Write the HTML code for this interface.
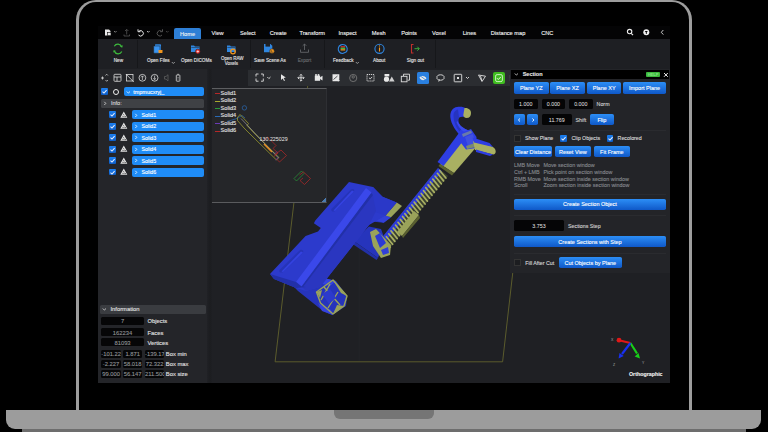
<!DOCTYPE html>
<html><head><meta charset="utf-8">
<style>
*{margin:0;padding:0;box-sizing:border-box}
html,body{width:768px;height:432px;overflow:hidden;background:#000;font-family:"Liberation Sans",sans-serif;color:#e6e6e6}
div,svg,span{position:absolute}
#lid{left:76px;top:0;width:616px;height:420px;border:3.8px solid #9d9d9d;border-top-width:2.2px;border-bottom:none;border-radius:20px 20px 0 0;background:#000}
#base{left:6px;top:410px;width:755px;height:19px;background:#9c9c9c;border-radius:0 0 9px 9px}
#notch{left:334px;top:410px;width:100px;height:9px;background:#757575;border-radius:0 0 6px 6px}
#strip{left:22px;top:429px;width:724px;height:3px;background:#6d6d6d}
#menu{left:98px;top:26px;width:572px;height:13px;background:#040405}
#ribbon{left:98px;top:39px;width:572px;height:30px;background:#1e1f23}
#lp{left:98px;top:69px;width:110px;height:314px;background:#242529}
#vp{left:208px;top:69px;width:462px;height:314px;background:#1f2024}
#rp{left:510px;top:69px;width:160px;height:204px;background:#232428}
.t{white-space:nowrap;font-size:5.8px;line-height:1;-webkit-text-stroke:0.12px currentColor}
.m{top:31.4px;color:#f2f2f2;font-size:5.65px}
.rl{top:59px;color:#e4e4e4;font-size:4.7px}
.sep{width:1px;background:#16171a}
.btn{-webkit-text-stroke:0.12px #fff;background:linear-gradient(#2c8ef6,#0f58c8);border-radius:1.8px;color:#fff;font-size:5.5px;line-height:1;text-align:center;white-space:nowrap}
.inp{background:#050506;border-radius:1.5px;color:#e8e8e8;font-size:5.3px;line-height:1;text-align:center;white-space:nowrap}
.hl{color:#85888d;font-size:5.4px}
</style></head><body>
<div id="lid"></div>
<div id="base"></div>
<div id="notch"></div>
<div id="strip"></div>

<!-- menu bar -->
<div id="menu"></div>
<div style="left:174px;top:28px;width:27px;height:11px;background:#2e7fd6;border-radius:2px 2px 0 0"></div>
<span class="t m" style="left:180px;top:31.7px">Home</span>
<span class="t m" style="left:211.5px">View</span>
<span class="t m" style="left:240px">Select</span>
<span class="t m" style="left:269.7px">Create</span>
<span class="t m" style="left:299.5px">Transform</span>
<span class="t m" style="left:338.5px">Inspect</span>
<span class="t m" style="left:371.8px">Mesh</span>
<span class="t m" style="left:401.2px">Points</span>
<span class="t m" style="left:432px">Voxel</span>
<span class="t m" style="left:462.7px">Lines</span>
<span class="t m" style="left:490.8px">Distance map</span>
<span class="t m" style="left:541.2px">CNC</span>

<!-- ribbon -->
<div id="ribbon"></div>
<div class="sep" style="left:136.5px;top:40px;height:28px"></div>
<div class="sep" style="left:250px;top:40px;height:28px"></div>
<div class="sep" style="left:323.5px;top:40px;height:28px"></div>
<div class="sep" style="left:434.5px;top:40px;height:28px"></div>
<!-- menu icons -->
<svg style="left:103px;top:27.2px" width="70" height="10" viewBox="0 0 70 10">
  <path d="M2 2.5h4l1.5 1.5v4.5h-5.5z" fill="#e8e8e8"/><rect x="4.5" y="5.5" width="3.5" height="3" fill="#e8e8e8" stroke="#070708" stroke-width="0.6"/>
  <path d="M11 4l1.3 1.3L13.6 4" stroke="#aaa" stroke-width="0.7" fill="none"/>
  <path d="M21 7.5v1.5h5.5v-1.5M23.7 7.5v-5M22 4l1.7-1.7L25.4 4" stroke="#555" stroke-width="0.8" fill="none"/>
  <path d="M36 4.2a2.7 2.7 0 1 1 -0.5 3.8M35 2.3v2.4h2.4" stroke="#e8e8e8" stroke-width="1" fill="none"/>
  <path d="M44 4l1.3 1.3L46.6 4" stroke="#ddd" stroke-width="0.8" fill="none"/>
  <path d="M58.5 4.2a2.7 2.7 0 1 0 0.5 3.8M59.5 2.3v2.4h-2.4" stroke="#555" stroke-width="1" fill="none"/>
  <path d="M63 4l1.3 1.3L65.6 4" stroke="#555" stroke-width="0.7" fill="none"/>
</svg>
<svg style="left:624px;top:27px" width="44" height="11" viewBox="0 0 44 11">
  <circle cx="5.6" cy="4.6" r="2.2" stroke="#eee" stroke-width="1.1" fill="none"/><path d="M7.2 6.3l1.8 1.8" stroke="#eee" stroke-width="1.2"/>
  <circle cx="22.3" cy="5.3" r="3" fill="#eee"/><path d="M20.8 4h3l-1.1 1.5v1.6h-0.8v-1.6z" fill="#070708"/>
  <path d="M39.3 3l-2 2.3 2 2.3" stroke="#ddd" stroke-width="0.9" fill="none"/>
</svg>
<!-- ribbon icons -->
<svg style="left:110px;top:42px" width="330" height="14" viewBox="0 0 330 14">
  <!-- New -->
  <path d="M4.3 4.2a4.1 4.1 0 0 1 7.4 0.6" stroke="#3dbb3d" stroke-width="1.2" fill="none"/>
  <path d="M11.8 9.5a4.1 4.1 0 0 1 -7.5 -0.3" stroke="#3dbb3d" stroke-width="1.2" fill="none"/>
  <path d="M12.8 3.2l-0.6 2.6-2.3-1.2z" fill="#3dbb3d"/><path d="M3.2 10.5l0.5-2.6 2.4 1.1z" fill="#3dbb3d"/>
  <!-- Open Files -->
  <rect x="45" y="2.2" width="6" height="7" rx="0.6" fill="#2f86e0"/>
  <rect x="43.7" y="4" width="6.3" height="7.2" rx="0.6" fill="#3a94f0" stroke="#1f2125" stroke-width="0.5"/>
  <rect x="48.5" y="8" width="4" height="3" rx="0.4" fill="#f0961e"/>
  <!-- Open DICOMs -->
  <path d="M81 3.5h3l1 1h4.5v5.5h-8.5z" fill="#2f86e0"/><path d="M81.3 5.5h8" stroke="#1f2125" stroke-width="0.5"/>
  <circle cx="87.8" cy="9.5" r="2.4" fill="#e03030" stroke="#1f2125" stroke-width="0.5"/><path d="M86.6 9.5h2.4M87.8 8.3v2.4" stroke="#fff" stroke-width="0.6"/>
  <!-- Open RAW -->
  <path d="M117 3.5h3l1 1h4.5v5.5h-8.5z" fill="#2f86e0"/><path d="M117.3 5.5h8" stroke="#1f2125" stroke-width="0.5"/>
  <circle cx="123" cy="9.5" r="2.3" fill="none" stroke="#f0961e" stroke-width="1.3"/>
  <!-- Save -->
  <path d="M154 2h6.5l1.8 1.8v6.5h-8.3z" fill="#2f86e0"/><rect x="155.5" y="2" width="4.5" height="2.6" fill="#1f2125"/>
  <circle cx="162" cy="9.2" r="2.4" fill="#f0961e" stroke="#1f2125" stroke-width="0.5"/><path d="M161.2 8v2.2h1.8" stroke="#1f2125" stroke-width="0.5" fill="none"/>
  <!-- Export -->
  <path d="M190.5 7.5v2.8h8v-2.8M194.5 8v-6M192.7 3.8l1.8-1.8 1.8 1.8" stroke="#6a6c70" stroke-width="0.8" fill="none"/>
  <!-- Feedback -->
  <path d="M232.8 11.5a4.5 4.5 0 1 1 3.2-1.4z" fill="none" stroke="#2f86e0" stroke-width="1.1"/>
  <rect x="230.6" y="4.2" width="4.6" height="1.3" fill="#e03030"/><rect x="230.6" y="5.7" width="4.6" height="1.3" fill="#3dbb3d"/><rect x="230.6" y="7.2" width="4.6" height="1.3" fill="#f0961e"/>
  <!-- About -->
  <circle cx="269.5" cy="6.8" r="4.6" fill="none" stroke="#2f86e0" stroke-width="1.1"/>
  <path d="M269.5 5.5v4" stroke="#f0961e" stroke-width="1.1"/><circle cx="269.5" cy="3.9" r="0.6" fill="#f0961e"/>
  <!-- Sign out -->
  <path d="M303.5 2.5h-2v8.5h2" stroke="#c0302c" stroke-width="1.1" fill="none"/>
  <path d="M304.5 6.7h4.5M307.3 4.7l2 2-2 2" stroke="#3dbb3d" stroke-width="0.9" fill="none"/>
</svg>
<span class="t rl" style="left:113.7px">New</span>
<span class="t rl" style="left:147px">Open Files</span>
<svg style="left:171px;top:61px" width="5" height="4"><path d="M0.8 1l1.5 1.5L3.8 1" stroke="#ccc" stroke-width="0.7" fill="none"/></svg>
<span class="t rl" style="left:181px">Open DICOMs</span>
<span class="t rl" style="left:221px;top:56.8px;font-size:4.5px">Open RAW</span>
<span class="t rl" style="left:224.8px;top:61.6px;font-size:4.5px">Voxels</span>
<span class="t rl" style="left:254px">Save Scene As</span>
<span class="t rl" style="left:297.7px;color:#6a6c70">Export</span>
<span class="t rl" style="left:333px">Feedback</span>
<svg style="left:355px;top:61px" width="5" height="4"><path d="M0.8 1l1.5 1.5L3.8 1" stroke="#ccc" stroke-width="0.7" fill="none"/></svg>
<span class="t rl" style="left:373px">About</span>
<span class="t rl" style="left:406.8px">Sign out</span>

<!-- left panel -->
<div id="lp"></div>
<svg style="left:99px;top:73px" width="86" height="10" viewBox="0 0 86 10">
  <path d="M2 5h3M3.5 3.5v3" stroke="#ddd" stroke-width="0.8"/><path d="M6.5 2.5l1.2-1.3 1.2 1.3M6.5 7l1.2 1.3L8.9 7" stroke="#ddd" stroke-width="0.7" fill="none"/>
  <rect x="15" y="1.3" width="7" height="7" rx="0.8" fill="none" stroke="#ddd" stroke-width="0.8"/><path d="M15 4h7M18 4v4.3" stroke="#ddd" stroke-width="0.8"/>
  <rect x="27.5" y="1.5" width="6.5" height="6.5" fill="none" stroke="#ddd" stroke-width="0.8"/><path d="M26.8 1l8 8" stroke="#ddd" stroke-width="0.8"/>
  <circle cx="43.4" cy="4.8" r="3.4" fill="none" stroke="#ddd" stroke-width="0.8"/><path d="M43.4 7v-4M42 4.3l1.4-1.4 1.4 1.4" stroke="#ddd" stroke-width="0.7" fill="none"/>
  <circle cx="55.6" cy="4.8" r="3.4" fill="none" stroke="#ddd" stroke-width="0.8"/><path d="M55.6 2.6v4M54.2 5.3l1.4 1.4 1.4-1.4" stroke="#ddd" stroke-width="0.7" fill="none"/>
  <path d="M65.5 3.5h1.5l2-1.8v6.2l-2-1.8h-1.5z" fill="none" stroke="#666" stroke-width="0.7"/>
  <rect x="77.3" y="2" width="3.6" height="6.2" rx="0.6" fill="none" stroke="#ddd" stroke-width="0.8"/><path d="M78.3 1.3h1.6" stroke="#ddd" stroke-width="0.7"/><path d="M78.5 4.5h1.2M78.5 6h1.2" stroke="#ddd" stroke-width="0.5"/>
</svg>
<div style="left:101px;top:88.4px;width:6.8px;height:6.8px;background:linear-gradient(#1c80f2,#0e5cc4);border-radius:1px"></div>
<svg style="left:101px;top:88.4px" width="7" height="7"><path d="M1.5 3.6l1.5 1.5 2.6-2.9" stroke="#e8f0ff" stroke-width="1.05" fill="none"/></svg>
<div style="left:112.6px;top:88.9px;width:6.4px;height:6.4px;border:1.8px solid #eee;border-radius:50%"></div>
<div style="left:123.5px;top:87.3px;width:80.5px;height:9px;background:#1f8cf6;border-radius:2px"></div>
<svg style="left:125.5px;top:89.5px" width="5" height="5"><path d="M0.8 1.5l1.6 1.6L4 1.5" stroke="#fff" stroke-width="0.8" fill="none"/></svg>
<span class="t" style="left:133.2px;top:89.8px;color:#fff;font-size:5.5px">tmpmucxryj_</span>
<div style="left:101.3px;top:99px;width:102.7px;height:8.8px;background:#3f4145;border-radius:1.5px"></div>
<svg style="left:103px;top:101px" width="5" height="5"><path d="M1.3 0.8l1.5 1.6-1.5 1.6" stroke="#ddd" stroke-width="0.8" fill="none"/></svg>
<span class="t" style="left:111px;top:100.8px;color:#d8d8d8;font-size:5.5px">Info:</span>
<div style="left:109.4px;top:111.40px;width:6.6px;height:6.7px;background:linear-gradient(#1c80f2,#0e5cc4);border-radius:1px"></div>
<svg style="left:109.4px;top:111.40px" width="7" height="7"><path d="M1.5 3.6l1.5 1.5 2.6-2.9" stroke="#e8f0ff" stroke-width="1.05" fill="none"/></svg>
<svg style="left:120px;top:110.70px" width="8" height="8" viewBox="0 0 8 8"><path d="M3.8 0.6L7.3 6.8H0.3z" fill="#e6e6e6"/><path d="M3.2 3.2l1.2 1M2.3 5.3h1.5M4.4 5.6h1.6" stroke="#333" stroke-width="0.7"/></svg>
<div style="left:131.9px;top:110.20px;width:72.1px;height:9px;background:#1f8cf6;border-radius:2px"></div>
<svg style="left:134px;top:112.50px" width="5" height="5"><path d="M1.3 0.8l1.5 1.6-1.5 1.6" stroke="#fff" stroke-width="0.8" fill="none"/></svg>
<span class="t" style="left:141.5px;top:112.70px;color:#fff;font-size:5.3px">Solid1</span>
<div style="left:109.4px;top:122.88px;width:6.6px;height:6.7px;background:linear-gradient(#1c80f2,#0e5cc4);border-radius:1px"></div>
<svg style="left:109.4px;top:122.88px" width="7" height="7"><path d="M1.5 3.6l1.5 1.5 2.6-2.9" stroke="#e8f0ff" stroke-width="1.05" fill="none"/></svg>
<svg style="left:120px;top:122.18px" width="8" height="8" viewBox="0 0 8 8"><path d="M3.8 0.6L7.3 6.8H0.3z" fill="#e6e6e6"/><path d="M3.2 3.2l1.2 1M2.3 5.3h1.5M4.4 5.6h1.6" stroke="#333" stroke-width="0.7"/></svg>
<div style="left:131.9px;top:121.68px;width:72.1px;height:9px;background:#1f8cf6;border-radius:2px"></div>
<svg style="left:134px;top:123.98px" width="5" height="5"><path d="M1.3 0.8l1.5 1.6-1.5 1.6" stroke="#fff" stroke-width="0.8" fill="none"/></svg>
<span class="t" style="left:141.5px;top:124.18px;color:#fff;font-size:5.3px">Solid2</span>
<div style="left:109.4px;top:134.36px;width:6.6px;height:6.7px;background:linear-gradient(#1c80f2,#0e5cc4);border-radius:1px"></div>
<svg style="left:109.4px;top:134.36px" width="7" height="7"><path d="M1.5 3.6l1.5 1.5 2.6-2.9" stroke="#e8f0ff" stroke-width="1.05" fill="none"/></svg>
<svg style="left:120px;top:133.66px" width="8" height="8" viewBox="0 0 8 8"><path d="M3.8 0.6L7.3 6.8H0.3z" fill="#e6e6e6"/><path d="M3.2 3.2l1.2 1M2.3 5.3h1.5M4.4 5.6h1.6" stroke="#333" stroke-width="0.7"/></svg>
<div style="left:131.9px;top:133.16px;width:72.1px;height:9px;background:#1f8cf6;border-radius:2px"></div>
<svg style="left:134px;top:135.46px" width="5" height="5"><path d="M1.3 0.8l1.5 1.6-1.5 1.6" stroke="#fff" stroke-width="0.8" fill="none"/></svg>
<span class="t" style="left:141.5px;top:135.66px;color:#fff;font-size:5.3px">Solid3</span>
<div style="left:109.4px;top:145.84px;width:6.6px;height:6.7px;background:linear-gradient(#1c80f2,#0e5cc4);border-radius:1px"></div>
<svg style="left:109.4px;top:145.84px" width="7" height="7"><path d="M1.5 3.6l1.5 1.5 2.6-2.9" stroke="#e8f0ff" stroke-width="1.05" fill="none"/></svg>
<svg style="left:120px;top:145.14px" width="8" height="8" viewBox="0 0 8 8"><path d="M3.8 0.6L7.3 6.8H0.3z" fill="#e6e6e6"/><path d="M3.2 3.2l1.2 1M2.3 5.3h1.5M4.4 5.6h1.6" stroke="#333" stroke-width="0.7"/></svg>
<div style="left:131.9px;top:144.64px;width:72.1px;height:9px;background:#1f8cf6;border-radius:2px"></div>
<svg style="left:134px;top:146.94px" width="5" height="5"><path d="M1.3 0.8l1.5 1.6-1.5 1.6" stroke="#fff" stroke-width="0.8" fill="none"/></svg>
<span class="t" style="left:141.5px;top:147.14px;color:#fff;font-size:5.3px">Solid4</span>
<div style="left:109.4px;top:157.32px;width:6.6px;height:6.7px;background:linear-gradient(#1c80f2,#0e5cc4);border-radius:1px"></div>
<svg style="left:109.4px;top:157.32px" width="7" height="7"><path d="M1.5 3.6l1.5 1.5 2.6-2.9" stroke="#e8f0ff" stroke-width="1.05" fill="none"/></svg>
<svg style="left:120px;top:156.62px" width="8" height="8" viewBox="0 0 8 8"><path d="M3.8 0.6L7.3 6.8H0.3z" fill="#e6e6e6"/><path d="M3.2 3.2l1.2 1M2.3 5.3h1.5M4.4 5.6h1.6" stroke="#333" stroke-width="0.7"/></svg>
<div style="left:131.9px;top:156.12px;width:72.1px;height:9px;background:#1f8cf6;border-radius:2px"></div>
<svg style="left:134px;top:158.42px" width="5" height="5"><path d="M1.3 0.8l1.5 1.6-1.5 1.6" stroke="#fff" stroke-width="0.8" fill="none"/></svg>
<span class="t" style="left:141.5px;top:158.62px;color:#fff;font-size:5.3px">Solid5</span>
<div style="left:109.4px;top:168.80px;width:6.6px;height:6.7px;background:linear-gradient(#1c80f2,#0e5cc4);border-radius:1px"></div>
<svg style="left:109.4px;top:168.80px" width="7" height="7"><path d="M1.5 3.6l1.5 1.5 2.6-2.9" stroke="#e8f0ff" stroke-width="1.05" fill="none"/></svg>
<svg style="left:120px;top:168.10px" width="8" height="8" viewBox="0 0 8 8"><path d="M3.8 0.6L7.3 6.8H0.3z" fill="#e6e6e6"/><path d="M3.2 3.2l1.2 1M2.3 5.3h1.5M4.4 5.6h1.6" stroke="#333" stroke-width="0.7"/></svg>
<div style="left:131.9px;top:167.60px;width:72.1px;height:9px;background:#1f8cf6;border-radius:2px"></div>
<svg style="left:134px;top:169.90px" width="5" height="5"><path d="M1.3 0.8l1.5 1.6-1.5 1.6" stroke="#fff" stroke-width="0.8" fill="none"/></svg>
<span class="t" style="left:141.5px;top:170.10px;color:#fff;font-size:5.3px">Solid6</span>

<!-- information -->
<div style="left:99.7px;top:304.7px;width:106px;height:9px;background:#3a3c40;border-radius:1.5px"></div>
<svg style="left:102px;top:306.5px" width="5" height="5"><path d="M0.8 1.5l1.6 1.6L4 1.5" stroke="#ddd" stroke-width="0.8" fill="none"/></svg>
<span class="t" style="left:110.5px;top:307.3px;color:#e0e0e0">Information</span>
<div style="left:101.2px;top:316.8px;width:42.7px;height:8px;background:#060607;border-radius:1.5px"></div><span class="t" style="left:101.2px;width:42.7px;text-align:center;top:319.20px;color:#8d8f93">7</span><span class="t" style="left:147.5px;top:319.20px;color:#e0e0e0">Objects</span>
<div style="left:101.2px;top:328.3px;width:42.7px;height:8px;background:#060607;border-radius:1.5px"></div><span class="t" style="left:101.2px;width:42.7px;text-align:center;top:330.70px;color:#8d8f93">162234</span><span class="t" style="left:147.5px;top:330.70px;color:#e0e0e0">Faces</span>
<div style="left:101.2px;top:338.3px;width:42.7px;height:8px;background:#060607;border-radius:1.5px"></div><span class="t" style="left:101.2px;width:42.7px;text-align:center;top:340.70px;color:#8d8f93">81093</span><span class="t" style="left:147.5px;top:340.70px;color:#e0e0e0">Vertices</span>
<div style="left:101.2px;top:349.8px;width:19.8px;height:8px;background:#060607;border-radius:1.5px;overflow:hidden"></div><span class="t" style="left:101.2px;width:19.8px;text-align:center;top:352.20px;color:#8d8f93;overflow:hidden">-101.22</span><div style="left:123px;top:349.8px;width:19.3px;height:8px;background:#060607;border-radius:1.5px;overflow:hidden"></div><span class="t" style="left:123px;width:19.3px;text-align:center;top:352.20px;color:#8d8f93;overflow:hidden">1.871</span><div style="left:145px;top:349.8px;width:19.1px;height:8px;background:#060607;border-radius:1.5px;overflow:hidden"></div><span class="t" style="left:145px;width:19.1px;text-align:center;top:352.20px;color:#8d8f93;overflow:hidden">-139.17</span><span class="t" style="left:165.8px;top:352.20px;color:#e0e0e0">Box min</span>
<div style="left:101.2px;top:360px;width:19.8px;height:8px;background:#060607;border-radius:1.5px;overflow:hidden"></div><span class="t" style="left:101.2px;width:19.8px;text-align:center;top:362.40px;color:#8d8f93;overflow:hidden">-2.227</span><div style="left:123px;top:360px;width:19.3px;height:8px;background:#060607;border-radius:1.5px;overflow:hidden"></div><span class="t" style="left:123px;width:19.3px;text-align:center;top:362.40px;color:#8d8f93;overflow:hidden">58.018</span><div style="left:145px;top:360px;width:19.1px;height:8px;background:#060607;border-radius:1.5px;overflow:hidden"></div><span class="t" style="left:145px;width:19.1px;text-align:center;top:362.40px;color:#8d8f93;overflow:hidden">72.322</span><span class="t" style="left:165.8px;top:362.40px;color:#e0e0e0">Box max</span>
<div style="left:101.2px;top:370px;width:19.8px;height:8px;background:#060607;border-radius:1.5px;overflow:hidden"></div><span class="t" style="left:101.2px;width:19.8px;text-align:center;top:372.40px;color:#8d8f93;overflow:hidden">99.000</span><div style="left:123px;top:370px;width:19.3px;height:8px;background:#060607;border-radius:1.5px;overflow:hidden"></div><span class="t" style="left:123px;width:19.3px;text-align:center;top:372.40px;color:#8d8f93;overflow:hidden">56.147</span><div style="left:145px;top:370px;width:19.1px;height:8px;background:#060607;border-radius:1.5px;overflow:hidden"></div><span class="t" style="left:145px;width:19.1px;text-align:center;top:372.40px;color:#8d8f93;overflow:hidden">211.500</span><span class="t" style="left:165.8px;top:372.40px;color:#e0e0e0">Box size</span>

<!-- viewport -->
<div id="vp"></div>
<div style="left:207px;top:69px;width:5px;height:314px;background:linear-gradient(90deg,#202125,#1c1d20 60%,#1e1f23)"></div>
<div style="left:248px;top:70.3px;width:262.6px;height:15.6px;background:#2b2d31"></div>
<div style="left:416.8px;top:71.6px;width:12.3px;height:12.4px;background:#2a80e0;border-radius:1.5px"></div>
<div style="left:492.7px;top:71.6px;width:12.7px;height:12.4px;background:#40bd20;border-radius:2px"></div>
<svg style="left:248px;top:70px" width="262" height="16" viewBox="248 70 262 16">
<g stroke="#e0e0e0" stroke-width="0.9" fill="none">
<path d="M256 76.5v-2.5h2.5M261 74h2.3v2.5M263.3 78.5v2.7h-2.3M258.5 81.2H256v-2.7"/>
<path d="M267.3 77l1.6 1.6 1.6-1.6"/>
<path d="M298 77.8h6M301 74.5v6.5M299.8 75.5l1.2-1.2 1.2 1.2M299.8 80l1.2 1.2 1.2-1.2M299 76.6l-1.2 1.2 1.2 1.2M303 76.6l1.2 1.2-1.2 1.2"/>
<circle cx="353.2" cy="78" r="3.6" stroke="#777"/><circle cx="353.2" cy="77" r="1.2" stroke="#777"/>
<rect x="367" y="74.5" width="7" height="6.5" stroke-dasharray="1.2 0.8"/><path d="M369 77.8l1.2 1.1 2-2"/>
<path d="M403.5 76v-1.8h6v6h-1.8"/><rect x="401.3" y="76.3" width="5.7" height="5.5"/>
<path d="M437 77.5a3.6 2.2 0 1 0 7 0a3.6 2.2 0 1 0 -7 0M439.5 79.5l-0.8 2"/>
<rect x="454.2" y="74.3" width="7.5" height="7.5" rx="0.5"/>
<path d="M466 77l1.5 1.5 1.5-1.5"/>
<path d="M478.5 75l7 1.2-3.5 5.3zM480.5 76l1.5 5"/>
<rect x="495.6" y="74.6" width="6.8" height="7" rx="1.5" stroke="#d8f5d0"/>
</g>
<path d="M281 74.2l4.8 3.2-2.2 0.5 1.4 2.6-1 0.5-1.3-2.6-1.7 1.5z" fill="#e8e8e8"/>
<path d="M314.8 75.6h5.3v5.2h-5.3z" fill="#e8e8e8"/><path d="M320.1 77.2l2.4-1.4v4.6l-2.4-1.4z" fill="#e8e8e8"/><circle cx="316" cy="75" r="1" fill="#e8e8e8"/><circle cx="318.5" cy="75" r="1" fill="#e8e8e8"/>
<path d="M332.5 74.2h6.8v4.5l-2.5 2.6h-4.3z" fill="#e8e8e8"/><path d="M333.5 79.5l4-3.5" stroke="#2b2d31" stroke-width="0.8"/><circle cx="338.2" cy="80.3" r="1.3" fill="#e8e8e8"/>
<circle cx="386.5" cy="79.2" r="2.6" fill="#e8e8e8"/><path d="M389 81.6l2.8-5 2.8 5z" fill="#d0d0d0"/><path d="M384.5 74h4.8v2.4h-4.8z" fill="#e8e8e8"/>
<rect x="457" y="77" width="2" height="2" fill="#e0e0e0"/>
<path d="M419.5 77.5c1.5-2 5-2 7 0.8-2 2.6-5.5 2.6-7-0.8z" fill="#e8e8e8"/><path d="M419 75l7.5 5.5" stroke="#2a80e0" stroke-width="0.8"/>
<path d="M497 78.2l1.3 1.3 2.5-2.6" stroke="#fff" stroke-width="0.9" fill="none"/>
<path d="M510 75v6" stroke="#777" stroke-width="0.6" stroke-dasharray="0.6 0.6"/>
</svg>

<!-- scene -->
<svg style="left:208px;top:69px" width="462" height="314" viewBox="208 69 462 314">
<path d="M307.7 86L275.1 361.8H502.6L534 86" stroke="#62622e" stroke-width="0.9" fill="none"/>
<path d="M359.2 240V361" stroke="#232428" stroke-width="0.8"/>
<g id="model">
<!-- lower spring / rod to block -->
<!-- spring body -->
<path d="M438.0 168.0L448.0 176.0L390.0 248.0L380.0 240.0z" fill="#3a4030"/>
<path d="M438.0 168.0L442.0 171.2L384.0 243.2L380.0 240.0z" fill="#2c3ad8"/>
<path d="M439.7 170.5L445.9 178.0" stroke="#a9b062" stroke-width="1.7" stroke-linecap="round"/>
<path d="M437.4 173.3L443.6 180.9" stroke="#a9b062" stroke-width="1.7" stroke-linecap="round"/>
<path d="M435.1 176.2L441.3 183.8" stroke="#a9b062" stroke-width="1.7" stroke-linecap="round"/>
<path d="M432.8 179.1L439.0 186.7" stroke="#a9b062" stroke-width="1.7" stroke-linecap="round"/>
<path d="M430.4 182.0L436.7 189.6" stroke="#a9b062" stroke-width="1.7" stroke-linecap="round"/>
<path d="M428.1 184.9L434.3 192.4" stroke="#a9b062" stroke-width="1.7" stroke-linecap="round"/>
<path d="M425.8 187.7L432.0 195.3" stroke="#a9b062" stroke-width="1.7" stroke-linecap="round"/>
<path d="M423.5 190.6L429.7 198.2" stroke="#a9b062" stroke-width="1.7" stroke-linecap="round"/>
<path d="M421.2 193.5L427.4 201.1" stroke="#a9b062" stroke-width="1.7" stroke-linecap="round"/>
<path d="M418.8 196.4L425.1 204.0" stroke="#a9b062" stroke-width="1.7" stroke-linecap="round"/>
<path d="M416.5 199.3L422.7 206.8" stroke="#a9b062" stroke-width="1.7" stroke-linecap="round"/>
<path d="M414.2 202.1L420.4 209.7" stroke="#a9b062" stroke-width="1.7" stroke-linecap="round"/>
<path d="M411.9 205.0L418.1 212.6" stroke="#a9b062" stroke-width="1.7" stroke-linecap="round"/>
<path d="M409.6 207.9L415.8 215.5" stroke="#a9b062" stroke-width="1.7" stroke-linecap="round"/>
<path d="M407.2 210.8L413.5 218.4" stroke="#a9b062" stroke-width="1.7" stroke-linecap="round"/>
<path d="M404.9 213.7L411.1 221.2" stroke="#a9b062" stroke-width="1.7" stroke-linecap="round"/>
<path d="M402.6 216.5L408.8 224.1" stroke="#a9b062" stroke-width="1.7" stroke-linecap="round"/>
<path d="M400.3 219.4L406.5 227.0" stroke="#a9b062" stroke-width="1.7" stroke-linecap="round"/>
<path d="M398.0 222.3L404.2 229.9" stroke="#a9b062" stroke-width="1.7" stroke-linecap="round"/>
<path d="M395.6 225.2L401.9 232.8" stroke="#a9b062" stroke-width="1.7" stroke-linecap="round"/>
<path d="M393.3 228.1L399.5 235.6" stroke="#a9b062" stroke-width="1.7" stroke-linecap="round"/>
<path d="M391.0 230.9L397.2 238.5" stroke="#a9b062" stroke-width="1.7" stroke-linecap="round"/>
<path d="M388.7 233.8L394.9 241.4" stroke="#a9b062" stroke-width="1.7" stroke-linecap="round"/>
<path d="M386.4 236.7L392.6 244.3" stroke="#a9b062" stroke-width="1.7" stroke-linecap="round"/>
<path d="M384.0 239.6L390.3 247.2" stroke="#a9b062" stroke-width="1.7" stroke-linecap="round"/>
<path d="M414 211L419 215L402 236L397 232z" fill="#9aa35a"/>
<path d="M419 215L420 218L403 238L402 236z" fill="#5a6030"/>
<!-- rod thick -->
<path d="M462 136L475.5 148L454 173L440 164z" fill="#a9b062"/>
<path d="M459 133L465 138.5L443.5 166L437.5 162z" fill="#2e3ee4"/>
<path d="M447 151L451 155L446 160.5L442 157.5z" fill="#2e3ee4"/>
<path d="M440 164L454 173L452 175.5L438.5 166z" fill="#5a6030"/>
<!-- hook -->
<path d="M462 137C456 132 451 124 450.3 117C450 111 453 107.5 457 107C461 106.5 464 107 466 108.5L464 117C461 116.5 458.5 117 457.8 120C457.5 123 460 126 464 128.5L470 131L471 135z" fill="#2e3ee4"/>
<path d="M453.5 116C453.5 112 455.5 110 458 109.5L459 117.5C458 120 458.5 124 462 128L459.5 131.5C455.5 127 453.5 121 453.5 116z" fill="#2634c0"/>
<path d="M457.5 121C459 125 463 128 469 131L467.5 134C462 131 458 127 456.5 122z" fill="#3a4aee"/>
<path d="M464.5 108C468.5 107.5 471 110 471 113C471 116 469.5 118 466.5 118C464.5 118 463.3 116.5 463.3 115z" fill="#a9b062"/>
<path d="M461 133L471 129L476.5 137L476 148L466 149.5L459.5 141z" fill="#2e3ee4"/>
<path d="M462 134L471 130.5L472 133L463 137z" fill="#6a7aa8"/>
<path d="M465 137L473 134L475 143L468 146z" fill="#4050e0"/>
<path d="M466 146L475 143L476 147L467 149z" fill="#7a8a70"/>
<!-- arm -->
<path d="M473 141L491 146C496.5 148 497 153.5 493.5 154.5L475 150z" fill="#a9b062"/>
<path d="M472.5 137.5L489.5 143L493 147L474 142.5z" fill="#2e3ee4"/>
<path d="M476 149.5L493 154.5L490 156L476 152z" fill="#2e3ee4"/>
</g>
<!-- main block -->
<g id="block">
<!-- piece a -->
<path d="M368.9 226.5L381 229L385 240L378 258L354 241.3z" fill="#2634bc"/>
<path d="M354 241.3L378 258L376.5 260L352.5 244z" fill="#2230a8"/>
<path d="M370 232L376 229L391 245L390 255L381 258L373 246z" fill="#9aa35a"/>
<path d="M375 236L380 233L386 243L380 248z" fill="#2c3ad4"/>
<path d="M381 250L388 247L389 253L383 255z" fill="#3240d8"/>
<!-- piece b -->
<path d="M290 282.8L312 275L336 281L347 296L346 306L332 315L323 311L298 291z" fill="#2634bc"/>
<path d="M312 275L336 281L330 286L308 280z" fill="#3442e0"/>
<path d="M318 303L331 310L333 315L322 311z" fill="#3442e0"/>
<g stroke="#9aa35a" stroke-width="1.4" fill="none" stroke-linejoin="round">
<path d="M316.5 292L333 280L347 296L344 306L333 314L320.5 303z"/>
<path d="M324 287L340 305M330 284L321 300M338 292L328 308"/>
</g>
<path d="M333 280L347 296L341 293z" fill="#9aa35a"/>
<path d="M344 306L333 314L337 305z" fill="#9aa35a"/>
<path d="M316.5 292L322 290L320 298z" fill="#9aa35a"/>
<path d="M322 294L330 289L336 298L329 304z" fill="#2c3acc"/>
<!-- shoulder lower body -->
<path d="M374.4 211.7L385.5 215.4L391 217.2L383.7 222.8L367 221L352 240z" fill="#2a36c0"/>
<path d="M374.4 213L385.5 215.4L391 217.2L383.7 222.8L374.4 220z" fill="#3240d8"/>
<!-- shoulder yellow -->
<path d="M396.7 202.4L402 206L391 217.2L385.5 215.4z" fill="#9aa35a"/>
<!-- bar -->
<path d="M349 182L373 187L382.5 196.8L396.7 202.4L385.5 215.4L369 225L330.8 273.6L320 287L306 291L296 288L274 279L270 274L305.6 236L318 231.6L320.8 228.1L313.9 223.2L315.3 220.4z" fill="#2c3acc"/>
<!-- shoulder face -->
<path d="M373 187L382.5 196.8L396.7 202.4L385.5 215.4L374.4 211.7L371 193z" fill="#2a38c8"/>
<!-- right strip -->
<path d="M372 192L376 211L369 225L330.8 273.6L320 287L306 291L301 286z" fill="#2a36c0"/>
<!-- groove -->
<path d="M371 193L373 195L303 287L301 286z" fill="#2230a8"/>
<!-- rail -->
<path d="M366 188L371.5 192.5L301.5 286.5L296 282z" fill="#3a48ea"/>
<!-- end face -->
<path d="M270 274L296 282L301.5 286.5L306 287L296 288L274 279z" fill="#2230a8"/>
<!-- slots -->
<path d="M351 189.5C353 188 355 189.5 354 191.5L335 211C333 212.5 330.5 211 331.5 209z" fill="#2634b8"/>
<path d="M352 190.5L354 191.5L335 211L333.5 210.5z" fill="#3442e0"/>
<path d="M300 250C302 249 304 250.5 303 252.5L283 272C281 273.5 278.5 272 279.5 270z" fill="#2634b8"/>
<path d="M301 251.5L303 252.5L283 272L281.5 271.5z" fill="#3442e0"/>
</g>

</svg>
<!-- legend / section window -->
<div style="left:211.5px;top:88px;width:115px;height:115px;background:#252629;border-top:1px solid #5d5e61;border-bottom:1.2px solid #5a5b5e;border-right:1px solid #2e2f33"></div>
<div style="left:322px;top:198px;width:4px;height:4px;background:linear-gradient(135deg,transparent 50%,#4a7ab0 50%)"></div>
<div style="left:215px;top:93.00px;width:5px;height:1px;background:#b52828"></div><span class="t" style="left:220.6px;top:90.60px;font-size:5.6px;color:#e0e0e0">Solid1</span>
<div style="left:215px;top:100.50px;width:5px;height:1px;background:#a9a92e"></div><span class="t" style="left:220.6px;top:98.10px;font-size:5.6px;color:#e0e0e0">Solid2</span>
<div style="left:215px;top:108.20px;width:5px;height:1px;background:#2a9a3a"></div><span class="t" style="left:220.6px;top:105.80px;font-size:5.6px;color:#e0e0e0">Solid3</span>
<div style="left:215px;top:115.70px;width:5px;height:1px;background:#2a6ab5"></div><span class="t" style="left:220.6px;top:113.30px;font-size:5.6px;color:#e0e0e0">Solid4</span>
<div style="left:215px;top:123.20px;width:5px;height:1px;background:#6a3ab5"></div><span class="t" style="left:220.6px;top:120.80px;font-size:5.6px;color:#e0e0e0">Solid5</span>
<div style="left:215px;top:130.50px;width:5px;height:1px;background:#b52828"></div><span class="t" style="left:220.6px;top:128.10px;font-size:5.6px;color:#e0e0e0">Solid6</span>
<svg style="left:212px;top:89px" width="114" height="113" viewBox="212 89 114 113">
<g fill="none" stroke-width="0.7">
<circle cx="244.4" cy="107.9" r="2.2" stroke="#2a6ab5"/>
<path d="M227 121.5L236 118.8L242 115.5L245 118" stroke="#2a6ab5"/>
<path d="M237.5 117.5L240 114.5L248.5 123.5L247 125.5L254 133L279 157.5L276.5 160L252 136L246 130L244 128L237.5 120.5z" stroke="#a9a92e"/>
<path d="M241 118.5L278.5 158" stroke="#c8c8c8" stroke-width="0.5"/>
<path d="M263 141L267.5 137L276 145.5L273 148.5L278 153L274 156.5" stroke="#b52828"/>
<path d="M264 144L272 152" stroke="#e08a20" stroke-width="1.6"/>
<path d="M274.5 155L281 150L286.5 155.5L279.5 162L276 158.5" stroke="#b52828"/>
<path d="M275 153.5l2-2M275.5 160l3-2.5" stroke="#6a3ab5"/>
<path d="M294 178.5L301.5 171L304 173.5L296.5 181z" stroke="#2a9a3a"/>
<path d="M299.5 175L303.5 172L310.5 178.5L304.5 184.5L300 180.5L303 178" stroke="#b52828"/>
</g>
<text x="259.6" y="140.8" font-size="5.3" fill="#e6e6e6" font-family="Liberation Sans">130.225029</text>
</svg>
<!-- right panel -->
<div id="rp"></div>
<div style="left:511px;top:70px;width:158px;height:8.5px;background:#000"></div>
<svg style="left:513.5px;top:72px" width="5" height="5"><path d="M0.8 1.5l1.6 1.6L4 1.5" stroke="#ddd" stroke-width="0.8" fill="none"/></svg>
<span class="t" style="left:522.7px;top:71.6px;color:#e6e6e6;font-weight:bold;font-size:5.5px">Section</span>
<div style="left:646px;top:71.7px;width:14px;height:5.3px;background:#3cb83c;border-radius:1px"></div>
<span class="t" style="left:646px;top:72.5px;width:14px;text-align:center;font-size:4px;font-weight:bold;color:#7de07d">HELP</span>
<svg style="left:662.5px;top:71.5px" width="6" height="6"><path d="M1 1l3.8 3.8M4.8 1L1 4.8" stroke="#eee" stroke-width="1"/></svg>
<div class="btn" style="left:513.8px;top:82.1px;width:34.90px;height:11.50px;padding-top:3.70px">Plane YZ</div>
<div class="btn" style="left:550.4px;top:82.1px;width:34.40px;height:11.50px;padding-top:3.70px">Plane XZ</div>
<div class="btn" style="left:587px;top:82.1px;width:34.40px;height:11.50px;padding-top:3.70px">Plane XY</div>
<div class="btn" style="left:623px;top:82.1px;width:43.00px;height:11.50px;padding-top:3.70px">Import Plane</div>
<div class="inp" style="left:514px;top:98.7px;width:23.50px;height:10.30px;padding-top:3.50px">1.000</div>
<div class="inp" style="left:541.7px;top:98.7px;width:23.50px;height:10.30px;padding-top:3.50px">0.000</div>
<div class="inp" style="left:569px;top:98.7px;width:23.60px;height:10.30px;padding-top:3.50px">0.000</div>
<span class="t" style="left:596.6px;top:102.20px;color:#d0d0d0;font-size:5.3px">Norm</span>
<div class="btn" style="left:514px;top:114px;width:10.60px;height:11.40px;padding-top:3.65px"></div>
<div class="btn" style="left:526.5px;top:114px;width:11.00px;height:11.40px;padding-top:3.65px"></div>
<svg style="left:514px;top:114px" width="24" height="12"><path d="M6 4.5l-1.6 1.5L6 7.5M30 0" stroke="#fff" stroke-width="0.9" fill="none"/><path d="M18.4 4.5l1.6 1.5-1.6 1.5" stroke="#fff" stroke-width="0.9" fill="none"/></svg>
<div class="inp" style="left:541.5px;top:114px;width:30.50px;height:11.40px;padding-top:4.05px">11.769</div>
<span class="t" style="left:575.5px;top:117.90px;color:#d0d0d0;font-size:5.3px">Shift</span>
<div class="btn" style="left:590px;top:114px;width:23.70px;height:11.40px;padding-top:3.65px">Flip</div>
<div style="left:514px;top:130px;width:152px;height:0.8px;background:#2a2b2f"></div>
<div style="left:514px;top:135px;width:6.6px;height:6.5px;background:#1c1d20;border:0.6px solid #333"></div><span class="t" style="left:525px;top:136px;color:#d8d8d8;font-size:5.3px">Show Plane</span>
<div style="left:560.2px;top:135px;width:6.6px;height:6.5px;background:linear-gradient(#1c80f2,#0e5cc4);border-radius:1px"></div><svg style="left:560.2px;top:135px" width="7" height="7"><path d="M1.5 3.6l1.5 1.5 2.6-2.9" stroke="#e8f0ff" stroke-width="1.05" fill="none"/></svg><span class="t" style="left:571.5px;top:136px;color:#d8d8d8;font-size:5.3px">Clip Objects</span>
<div style="left:606.6px;top:135px;width:6.6px;height:6.5px;background:linear-gradient(#1c80f2,#0e5cc4);border-radius:1px"></div><svg style="left:606.6px;top:135px" width="7" height="7"><path d="M1.5 3.6l1.5 1.5 2.6-2.9" stroke="#e8f0ff" stroke-width="1.05" fill="none"/></svg><span class="t" style="left:617.6px;top:136px;color:#d8d8d8;font-size:5.3px">Recolored</span>
<div class="btn" style="left:514px;top:146.4px;width:38.00px;height:10.80px;padding-top:3.35px">Clear Distance</div>
<div class="btn" style="left:555px;top:146.4px;width:35.70px;height:10.80px;padding-top:3.35px">Reset View</div>
<div class="btn" style="left:594.2px;top:146.4px;width:35.40px;height:10.80px;padding-top:3.35px">Fit Frame</div>
<span class="t hl" style="left:514px;top:163.00px">LMB Move</span><span class="t hl" style="left:543.4px;top:163.00px">Move section window</span>
<span class="t hl" style="left:514px;top:169.80px">Ctrl + LMB</span><span class="t hl" style="left:543.4px;top:169.80px">Pick point on section window</span>
<span class="t hl" style="left:514px;top:176.60px">RMB Move</span><span class="t hl" style="left:543.4px;top:176.60px">Move section inside section window</span>
<span class="t hl" style="left:514px;top:183.40px">Scroll</span><span class="t hl" style="left:543.4px;top:183.40px">Zoom section inside section window</span>
<div style="left:514px;top:193.5px;width:152px;height:0.8px;background:#2a2b2f"></div>
<div class="btn" style="left:514px;top:198.9px;width:152.00px;height:11.10px;padding-top:3.50px">Create Section Object</div>
<div style="left:514px;top:214.6px;width:152px;height:0.8px;background:#2a2b2f"></div>
<div class="inp" style="left:514px;top:219.8px;width:50.00px;height:11.20px;padding-top:3.95px">3.753</div>
<span class="t" style="left:568px;top:223.70px;color:#d0d0d0;font-size:5.3px">Sections Step</span>
<div class="btn" style="left:514px;top:236.4px;width:152.00px;height:11.00px;padding-top:3.45px">Create Sections with Step</div>
<div style="left:514px;top:252.8px;width:152px;height:0.8px;background:#2a2b2f"></div>
<div style="left:514px;top:259px;width:6.6px;height:6.6px;background:#1c1d20;border:0.6px solid #333"></div><span class="t" style="left:525.3px;top:260.6px;color:#d8d8d8;font-size:5.3px">Fill After Cut</span>
<div class="btn" style="left:558.6px;top:257.3px;width:63.30px;height:10.70px;padding-top:3.30px">Cut Objects by Plane</div>
<span class="t" style="left:629px;top:372px;color:#f0f0f0;font-size:5.3px;font-weight:bold">Orthographic</span>
<svg style="left:605px;top:333px" width="45" height="35" viewBox="605 333 45 35">
<path d="M630.4 343L620 340.5" stroke="#e01818" stroke-width="2.2"/><circle cx="619" cy="340.2" r="2.4" fill="#e01818"/>
<path d="M630.4 343L637 353.5" stroke="#18d018" stroke-width="2.2"/><path d="M640 358.5l-5.3-2 3.8-3.4z" fill="#18d018"/>
<path d="M630.4 343L622 354" stroke="#1830f0" stroke-width="2.2"/><path d="M618.6 358.6l0.9-5.5 4.2 2.8z" fill="#1830f0"/>
<text x="611" y="340.5" font-size="3.5" fill="#aaa" font-family="Liberation Sans">X</text>
<text x="613" y="365.5" font-size="3.5" fill="#aaa" font-family="Liberation Sans">Z</text>
<text x="642" y="364" font-size="3.5" fill="#aaa" font-family="Liberation Sans">Y</text>
</svg>
</body></html>
